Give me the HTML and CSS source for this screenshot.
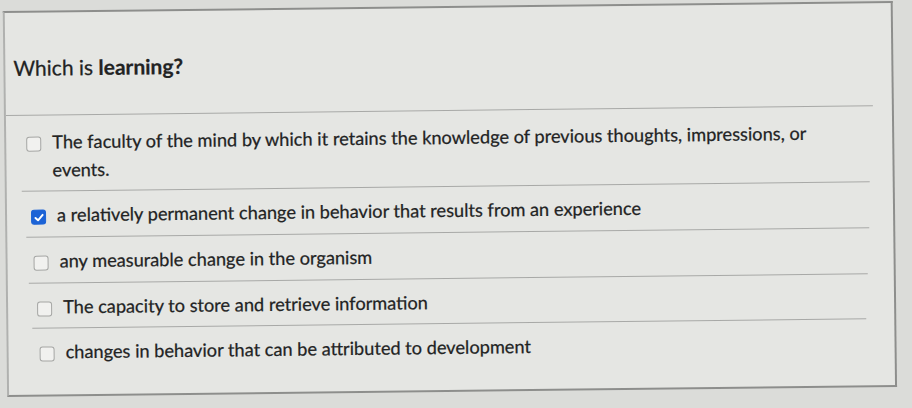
FILE: index.html
```html
<!DOCTYPE html>
<html>
<head>
  <meta charset="utf-8">
  <title>Quiz question</title>
  <link rel="stylesheet" href="styles.css">
</head>
<body>
  <div class="question">
    <div class="prompt">Which is <b>learning?</b></div>

    <div class="answers">
      <label class="answer a1">
        <span class="box"></span>
        <span class="text">The faculty of the mind by which it retains the knowledge of previous thoughts, impressions, or events.</span>
      </label>
      <label class="answer a2">
        <span class="box checked">
          <svg viewBox="0 0 16 16" width="12" height="12"><path d="M3.2 8.4 L6.6 11.6 L12.8 4.4" fill="none" stroke="#fff" stroke-width="2.6" stroke-linecap="round" stroke-linejoin="round"/></svg>
        </span>
        <span class="text">a relatively permanent change in behavior that results from an experience</span>
      </label>
      <label class="answer a3">
        <span class="box"></span>
        <span class="text">any measurable change in the organism</span>
      </label>
      <label class="answer a4">
        <span class="box"></span>
        <span class="text">The capacity to store and retrieve information</span>
      </label>
      <label class="answer a5">
        <span class="box"></span>
        <span class="text">changes in behavior that can be attributed to development</span>
      </label>
    </div>
  </div>
</body>
</html>
```

FILE: styles.css
```css
body {
  margin: 0;
  background-color: #dbdcd9;
  font-family: Lato, "Open Sans", sans-serif;
  color: #222323;
  overflow: hidden;
}
.question {
  margin: 11px 0 0 5px;
  width: 886px;
  height: 382px;
  border: 2px solid #8d8e8c;
  border-left-color: #b0b1af;
  background-color: #e5e6e3;
  transform: rotate(-0.65deg);
  transform-origin: 0 200px;
  -webkit-text-stroke: 0.25px #222323;
}
.prompt {
  padding: 40px 0 0 8px;
  font-size: 21px;
  line-height: 30px;
  height: 30px;
  margin-right: 19px;
  padding-bottom: 32px;
  border-bottom: 1px solid #a8a9a7;
}
.prompt b {
  font-weight: 700;
}
.answers {
  display: flex;
  flex-direction: column;
}
.answer {
  display: flex;
  align-items: flex-start;
  gap: 11px;
  padding: 9px 0 8px 5px;
  font-size: 18.2px;
  line-height: 28px;
  border-bottom: 1px solid #a8a9a7;
}
.answer:last-child {
  border-bottom: none;
}
.a1 { margin: 0 23px 0 15px; padding-top: 12px; padding-bottom: 7px; }
.a2 { margin: 0 24px 0 19px; }
.a3 { margin: 0 26px 0 21px; }
.a4 { margin: 0 28px 0 24px; padding-bottom: 7px; }
.a5 { margin: 0 30px 0 26px; }
.box {
  flex: none;
  width: 13px;
  height: 13px;
  margin-top: 9px;
  border: 1.5px solid #a5a6a4;
  border-radius: 3px;
  background-color: #f1f1ef;
  display: flex;
  align-items: center;
  justify-content: center;
}
.box.checked {
  background-color: #1c63d6;
  border-color: #1c63d6;
}
.text {
  max-width: 766px;
}
```
